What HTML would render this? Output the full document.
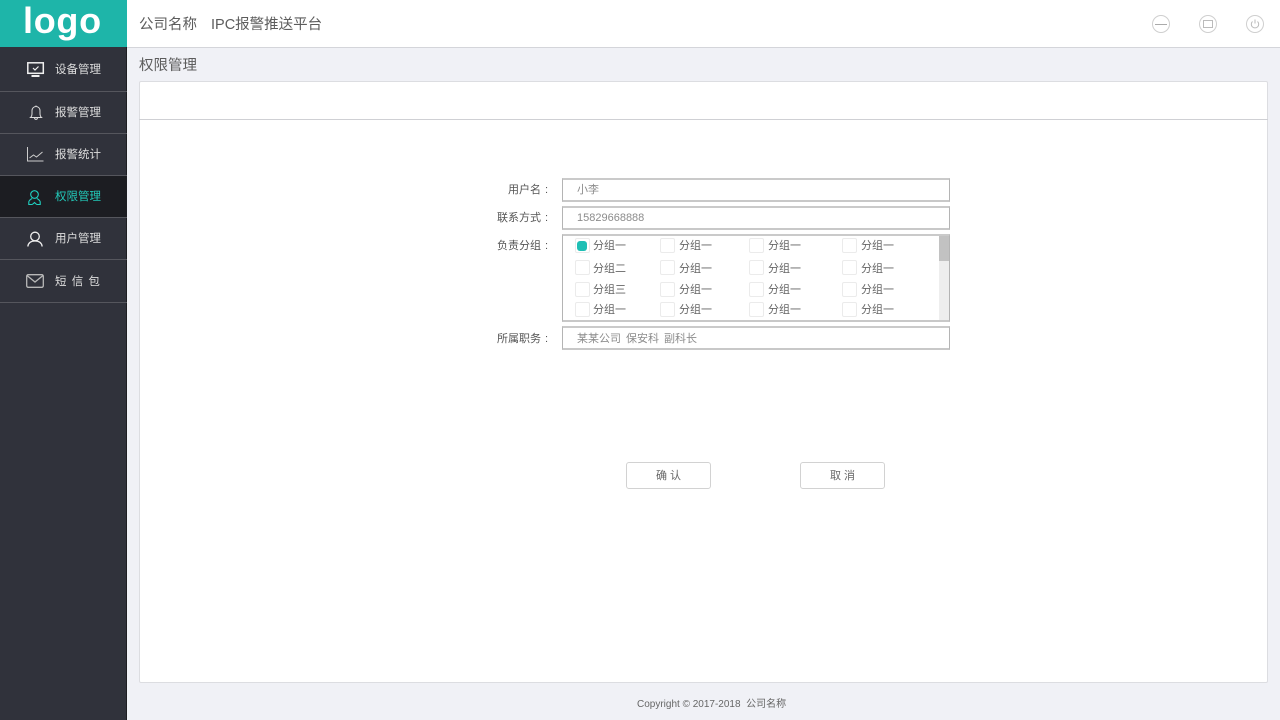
<!DOCTYPE html>
<html><head><meta charset="utf-8"><style>
*{box-sizing:border-box;margin:0;padding:0}
html,body{width:1280px;height:720px;overflow:hidden;background:#f0f1f6;font-family:"Liberation Sans","Noto Sans CJK SC",sans-serif;position:relative}
.a{position:absolute;white-space:nowrap}
.t{font-size:11px;line-height:14px;color:#666}
.n{font-size:11.5px;line-height:14px;color:#ddd;left:55px;width:60px}
.ln{position:absolute;left:0;width:127px;height:1px;background:#55565d}
.box{position:absolute;left:562px;width:388px;background:#fff;border:1px solid #b4b4b4;border-top:2px solid #cacaca;border-bottom:2px solid #c8c8c8}
.v{font-size:11px;line-height:14px;color:#8c8c8c;left:577px}
.l{font-size:11px;line-height:14px;color:#555;left:471px;width:70px;text-align:right}
.k{font-size:11px;line-height:14px;color:#555;left:545px}
.c{position:absolute;width:15px;height:15px;border:1px solid #ebebeb;border-radius:2px;background:#fff}
svg{position:absolute;overflow:visible;fill:none}
.b{position:absolute;top:462px;width:85px;height:27px;background:#fff;border:1px solid #d2d2d2;border-radius:3px;font-size:11px;line-height:26px;color:#666;text-align:center}
</style></head><body>
<div class="a" style="left:0;top:0;width:127px;height:47px;background:#1eb5a9"></div>
<div class="a" style="left:23px;top:0;color:#fff;font-size:36px;font-weight:bold;line-height:42px;letter-spacing:.7px">logo</div>
<div class="a" style="left:127px;top:0;width:1153px;height:48px;background:#fff;border-bottom:1px solid #d4d5da"></div>
<div class="a" style="left:139px;top:15px;font-size:14.5px;line-height:20px;color:#5c5c5c">公司名称</div>
<div class="a" style="left:211px;top:15px;font-size:14.5px;line-height:20px;color:#5c5c5c">IPC报警推送平台</div>
<svg style="left:1152px;top:15px" width="18" height="18" stroke="#cfcfcf"><circle cx="9" cy="9" r="8.5"/><path d="M3 9.500h12" stroke="#aaa"/></svg>
<svg style="left:1199px;top:15px" width="18" height="18" stroke="#cfcfcf"><circle cx="9" cy="9" r="8.5"/><rect x="4.500" y="5.500" width="9" height="7" stroke="#bbb"/></svg>
<svg style="left:1246px;top:15px" width="18" height="18" stroke="#cfcfcf"><circle cx="9" cy="9" r="8.5"/><path d="M9 4.500v4M6.500 6.500a3.700 3.700 0 1 0 5 0" stroke="#bbb"/></svg>

<div class="a" style="left:0;top:47px;width:127px;height:673px;background:#30323b;border-right:1px solid #1d1e22"></div>
<div class="ln" style="top:91px"></div><div class="ln" style="top:133px"></div><div class="ln" style="top:175px"></div>
<div class="a" style="left:0;top:176px;width:127px;height:41px;background:#1c1d22"></div>
<div class="ln" style="top:217px"></div><div class="ln" style="top:259px"></div><div class="ln" style="top:302px"></div>
<svg style="left:27px;top:62px" width="18" height="16" stroke="#f0f0f0"><rect x=".8" y=".8" width="15.500" height="10.500" stroke-width="1.500"/><path d="M4.500 14h8" stroke-width="2"/><path d="M6 6l2 2 3.500-3.500" stroke-width="1.200"/></svg>
<svg style="left:29px;top:105px" width="14" height="16" stroke="#ddd"><path d="M1.500 12.500c1.200-1 1.500-2 1.500-4V5.500a4 4 0 0 1 8 0V8.500c0 2 .3 3 1.500 4zM5.500 12.500c0 2.500 3 2.500 3 0M7 .5v1"/></svg>
<svg style="left:27px;top:147px" width="17" height="15" stroke="#ccc"><path d="M.5 0v14h16M2.500 11l4-3 3 2 6-5"/></svg>
<svg style="left:28px;top:190px" width="14" height="16" stroke="#1fd0c0" stroke-width="1.100"><circle cx="6.500" cy="4.500" r="3.800"/><path d="M4 8.500c-1.500 1-3.200 2-3.200 3.500v2.500h3.500M9 8.500c1.500 1 3.200 2 3.200 3.500v2.500H8.700M4.300 14.500l2.200-2 2.200 2"/></svg>
<svg style="left:27px;top:231px" width="16" height="16" stroke="#eee" stroke-width="1.300"><circle cx="8" cy="5.500" r="4.300"/><path d="M.8 15.500c.5-3.500 3-5.500 7.200-5.500s6.700 2 7.200 5.500"/></svg>
<svg style="left:26px;top:274px" width="18" height="14" stroke="#b8b8b8" stroke-width="1.300"><rect x=".7" y=".7" width="16.600" height="12.600" rx="1.500"/><path d="M1 1.500l8 6.500 8-6.500"/></svg>
<div class="a n" style="top:63px">设备管理</div>
<div class="a n" style="top:106px">报警管理</div>
<div class="a n" style="top:148px">报警统计</div>
<div class="a n" style="top:190px;color:#22c8b8">权限管理</div>
<div class="a n" style="top:232px">用户管理</div>
<div class="a n" style="top:275px;letter-spacing:1px">短 信 包</div>

<div class="a" style="left:139px;top:56px;font-size:14.5px;line-height:20px;color:#5c5c5c">权限管理</div>
<div class="a" style="left:139px;top:81px;width:1129px;height:602px;background:#fff;border:1px solid #dcdde1;border-radius:2px"></div>
<div class="a" style="left:139px;top:119px;width:1129px;height:1px;background:#cfd0d4"></div>

<div class="a l" style="top:183px">用户名</div><div class="a k" style="top:183px">:</div>
<div class="a l" style="top:211px">联系方式</div><div class="a k" style="top:211px">:</div>
<div class="a l" style="top:239px">负责分组</div><div class="a k" style="top:239px">:</div>
<div class="a l" style="top:332px">所属职务</div><div class="a k" style="top:332px">:</div>
<div class="box" style="top:178px;height:24px"></div>
<div class="box" style="top:206px;height:24px"></div>
<div class="box" style="top:234px;height:88px"></div>
<div class="box" style="top:326px;height:24px"></div>
<div class="a v" style="top:183px">小李</div>
<div class="a v" style="top:211px">15829668888</div>
<div class="a v" style="top:332px">某某公司<span style="margin-left:5px">保安科</span><span style="margin-left:5px">副科长</span></div>
<div class="a" style="left:939px;top:236px;width:10px;height:84px;background:#eee"></div>
<div class="a" style="left:939px;top:236px;width:10px;height:25px;background:#c2c2c2"></div>

<div class="c" style="left:575px;top:238px"></div><div class="a" style="left:577px;top:241px;width:10px;height:10px;background:#1fbfb5;border-radius:3px"></div>
<div class="c" style="left:660px;top:238px"></div><div class="c" style="left:749px;top:238px"></div><div class="c" style="left:842px;top:238px"></div>
<div class="c" style="left:575px;top:260px"></div><div class="c" style="left:660px;top:260px"></div><div class="c" style="left:749px;top:260px"></div><div class="c" style="left:842px;top:260px"></div>
<div class="c" style="left:575px;top:282px"></div><div class="c" style="left:660px;top:282px"></div><div class="c" style="left:749px;top:282px"></div><div class="c" style="left:842px;top:282px"></div>
<div class="c" style="left:575px;top:302px"></div><div class="c" style="left:660px;top:302px"></div><div class="c" style="left:749px;top:302px"></div><div class="c" style="left:842px;top:302px"></div>

<div class="a t" style="left:593px;top:239px">分组一</div><div class="a t" style="left:679px;top:239px">分组一</div><div class="a t" style="left:768px;top:239px">分组一</div><div class="a t" style="left:861px;top:239px">分组一</div>
<div class="a t" style="left:593px;top:262px">分组二</div><div class="a t" style="left:679px;top:262px">分组一</div><div class="a t" style="left:768px;top:262px">分组一</div><div class="a t" style="left:861px;top:262px">分组一</div>
<div class="a t" style="left:593px;top:283px">分组三</div><div class="a t" style="left:679px;top:283px">分组一</div><div class="a t" style="left:768px;top:283px">分组一</div><div class="a t" style="left:861px;top:283px">分组一</div>
<div class="a t" style="left:593px;top:303px">分组一</div><div class="a t" style="left:679px;top:303px">分组一</div><div class="a t" style="left:768px;top:303px">分组一</div><div class="a t" style="left:861px;top:303px">分组一</div>

<div class="b" style="left:626px">确 认</div>
<div class="b" style="left:800px">取 消</div>
<div class="a" style="left:637px;top:698px;font-size:10px;line-height:14px;color:#666">Copyright © 2017-2018&nbsp; 公司名称</div>
</body></html>
